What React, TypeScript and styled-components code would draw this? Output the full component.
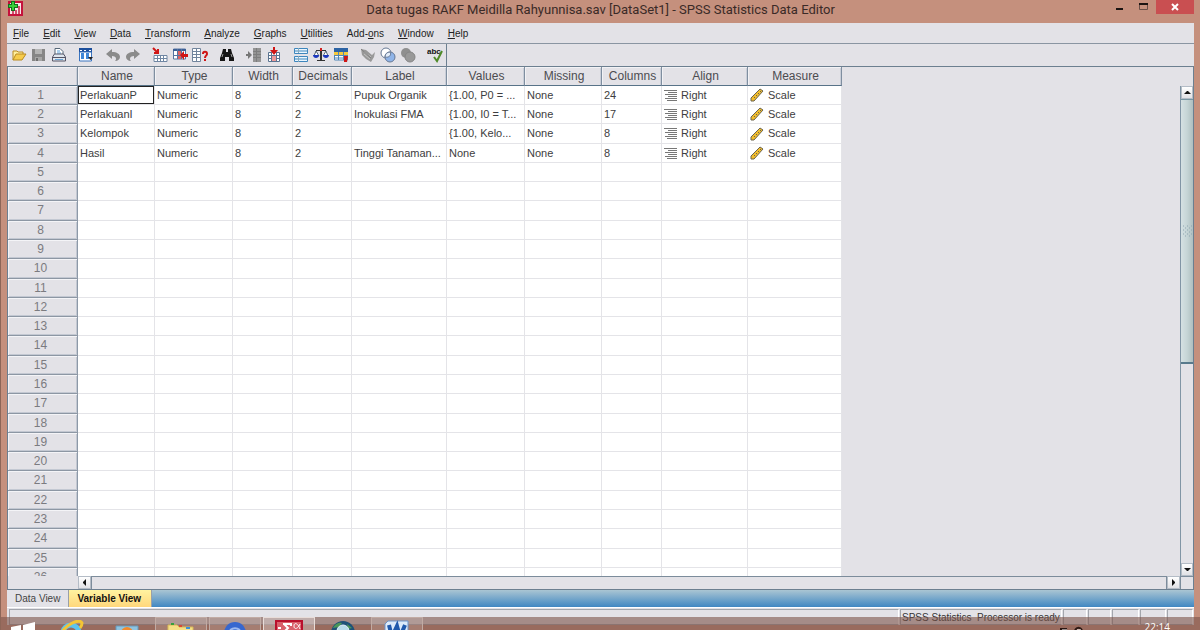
import React from 'react';
import styled, { createGlobalStyle } from 'styled-components';

const face = '#e3e2e7';
const edge = '#6c7f90';
const sans = '"Liberation Sans", Arial, sans-serif';

const GlobalStyle = createGlobalStyle`
  * { box-sizing: border-box; }
  body { margin: 0; background: #c5907d; font-family: ${sans}; color: #222; }
  button { font: inherit; color: inherit; border: 0; padding: 0; margin: 0; background: none; }
  svg { display: block; }
`;

const Screen = styled.div`
  position: relative;
  display: flex;
  flex-direction: column;
  height: 100vh;
  padding: 0 6px 5px 6px;
  overflow: hidden;
  border-left: 1px solid #8d6658;
`;

const TitleBar = styled.header`
  flex: none;
  display: grid;
  grid-template-columns: 1fr auto 1fr;
  height: 23px;
`;

const AppIcon = styled.div`
  padding: 1px 0 0 1px;
`;

const Title = styled.h1`
  margin: 0;
  font: 400 13px/19px Roboto, "Open Sans", sans-serif;
  color: #3a2a27;
  white-space: nowrap;
`;

const WindowControls = styled.div`
  display: flex;
  justify-content: flex-end;
  align-items: flex-start;
`;

const WindowButton = styled.button<{ $close?: boolean }>`
  display: grid;
  place-items: center;
  width: ${p => (p.$close ? 38 : 24)}px;
  height: 14px;
  background: ${p => (p.$close ? '#c94f51' : 'transparent')};
`;

const Client = styled.main`
  flex: 1;
  min-height: 0;
  display: flex;
  flex-direction: column;
  background: ${face};
`;

const MenuBar = styled.nav`
  flex: none;
  display: flex;
  gap: 14px;
  height: 21px;
  padding: 0 6px;
  border-bottom: 1px solid #8a95a2;
`;

const MenuItem = styled.button`
  font-size: 10px;
  line-height: 22px;
`;

const ToolBar = styled.div`
  flex: none;
  display: flex;
  gap: 7px;
  align-self: flex-start;
  height: 22px;
  padding: 0 1px 0 2px;
  border-right: 1px solid ${edge};
`;

const ToolGroup = styled.div`
  display: flex;
`;

const ToolButton = styled.button`
  display: grid;
  place-items: center;
  width: 20px;
  height: 21px;
`;

const Editor = styled.section`
  flex: 1;
  min-height: 0;
  display: grid;
  grid-template-columns: 1fr 13px;
  grid-template-rows: 1fr 13px;
  border: 1px solid ${edge};
`;

const GridPane = styled.div`
  overflow: hidden;
`;

const Grid = styled.table`
  table-layout: fixed;
  width: 834px;
  border-collapse: separate;
  border-spacing: 0;
  background: #fff;
`;

const ColHead = styled.th`
  height: 19px;
  padding: 0 0 0 2px;
  font: 400 12px/18px ${sans};
  color: #4c4c50;
  background: ${face};
  border-right: 1px solid #7f8ea0;
  border-bottom: 1px solid #587388;
  box-shadow: inset 1px 1px #f2f2f5, inset -1px 0 #c9ced8;
`;

const Row = styled.tr`
  height: 19px;
  &:nth-child(7n + 3), &:nth-child(7n) { height: 20px; }
`;

const RowHead = styled.th`
  padding: 0 4px 0 0;
  font: 400 12px/17px ${sans};
  color: #7b7b80;
  background: ${face};
  border-right: 1px solid #8d99a8;
  border-bottom: 1px solid #8d97a4;
  box-shadow: inset 1px 1px #f4f4f7, inset -1px -1px #c3c8d2;
`;

const Cell = styled.td<{ $selected?: boolean }>`
  padding: 0 0 0 2px;
  font-size: 11px;
  line-height: 17px;
  color: #3d3d40;
  white-space: nowrap;
  overflow: hidden;
  text-overflow: ellipsis;
  border-right: 1px solid #e4e4e8;
  border-bottom: 1px solid #e4e4e8;
  ${p => p.$selected && 'box-shadow: inset 0 0 0 1px #222;'}
`;

const IconText = styled.span`
  display: flex;
  align-items: center;
  gap: 4px;
`;

const VScroll = styled.div`
  display: flex;
  flex-direction: column;
  margin-top: 19px;
  border-left: 1px solid #8195a5;
`;

const VThumb = styled.div`
  flex: 0 0 54%;
  display: grid;
  place-items: center;
  background: linear-gradient(90deg, #d5e1e3, #c6d5d6 50%, #aebfc0);
  border-top: 1px solid #7595a2;
  border-bottom: 2px solid #587a8c;
`;

const VTrack = styled.div`
  flex: 1;
`;

const ScrollButton = styled.button`
  flex: none;
  display: grid;
  place-items: center;
  width: 13px;
  height: 13px;
  background: linear-gradient(#fff, #e1e1e5);
  border: 1px solid #b4bcc6;
`;

const VScrollButton = styled(ScrollButton)`
  width: 12px;
`;

const HScroll = styled.div`
  display: flex;
  padding-left: 70px;
`;

const HTrack = styled.div`
  flex: 1;
  border: 1px solid #7c8c9b;
  border-bottom: 0;
`;

const Corner = styled.div`
  border-top: 1px solid #7c8c9b;
  border-left: 1px solid #7c8c9b;
`;

const Tabs = styled.div`
  flex: none;
  display: flex;
  height: 17px;
  background: linear-gradient(#aac5d3, #4188c2);
`;

const Tab = styled.button<{ $active?: boolean }>`
  padding: 0 ${p => (p.$active ? 10 : 8)}px 0 8px;
  font-size: 10px;
  line-height: 18px;
  font-weight: ${p => (p.$active ? 700 : 400)};
  background: ${p => (p.$active ? 'linear-gradient(#fff3a0, #ffd77c)' : face)};
  border-right: 1px solid #9aa0a8;
  color: ${p => (p.$active ? '#111' : '#444')};
`;

const StatusBar = styled.footer`
  flex: none;
  display: flex;
  gap: 1px;
  height: 18px;
  padding: 1px 1px 0 2px;
  border-top: 1px solid #fff;
`;

const StatusCell = styled.div<{ $width?: number }>`
  flex: ${p => (p.$width ? `0 0 ${p.$width}px` : '1')};
  padding: 0 1px;
  font-size: 10px;
  line-height: 16px;
  white-space: pre;
  color: #333;
  border: 1px solid #a3a6ac;
  border-right-color: #fff;
`;

const TaskBar = styled.nav`
  position: absolute;
  left: 0;
  right: 0;
  bottom: 0;
  display: flex;
  justify-content: space-between;
  height: 13px;
  overflow: hidden;
  background: rgba(123, 83, 73, 0.6);
`;

const TaskList = styled.div`
  display: flex;
`;

const TaskButton = styled.button<{ $open?: boolean; $active?: boolean }>`
  display: flex;
  justify-content: center;
  align-items: flex-start;
  width: 52px;
  height: 40px;
  margin-right: 2px;
  padding-top: 2px;
  background: ${p => (p.$active ? 'rgba(255,255,255,0.3)' : p.$open ? 'rgba(255,255,255,0.12)' : 'none')};
  border: 1px solid ${p => (p.$active ? '#e8dcd8' : p.$open ? '#c1aba4' : 'transparent')};
`;

const StartButton = styled(TaskButton)`
  width: 44px;
`;

const Tray = styled.div`
  display: flex;
  align-items: flex-start;
  gap: 44px;
  padding-right: 30px;
`;

const Clock = styled.time`
  padding-top: 3px;
  font: 400 10px/14px "Open Sans", sans-serif;
  color: #fff;
`;

const Svg = ({ w = 16, h = 16, children }: { w?: number; h?: number; children: React.ReactNode }) => (
  <svg width={w} height={h} viewBox={`0 0 ${w} ${h}`} aria-hidden="true">{children}</svg>
);

const OpenIcon = () => (
  <Svg>
    <path d="M2 13V4h4l1 1h5v3" fill="#fff0a0" stroke="#b98a20" />
    <path d="M2 13l3-6h10l-4 6z" fill="#f6cc4c" stroke="#b98a20" />
  </Svg>
);
const SaveIcon = () => (
  <Svg>
    <path d="M1 2h13v12H1z" fill="#868686" />
    <path d="M4 2h7v5H4z" fill="#b4b4b4" />
    <path d="M4 10h7v4H4z" fill="#a6a6a6" />
    <path d="M5 11h2v3H5z" fill="#707070" />
  </Svg>
);
const PrintIcon = () => (
  <Svg>
    <path d="M4 8V1.500h5l3 3V8z" fill="#fff" stroke="#567" />
    <path d="M6 4h3M6 6h4" stroke="#5aa0d8" />
    <path d="M1.500 10l2-3h9l2 3v4h-13z" fill="#dfe6ee" stroke="#556" />
    <path d="M2 10.500h12" stroke="#556" />
    <path d="M4 12h8v1H4z" fill="#6aa6d8" />
  </Svg>
);
const RecallIcon = () => (
  <Svg>
    <path d="M1 1h13v4H1z" fill="#1c4f9c" />
    <path d="M1.500 5h12v9h-12z" fill="#fff" stroke="#3a74c0" />
    <path d="M3 6h3v6H3zM8 6h3v6H8z" fill="#3f87d8" />
    <path d="M2 3.500h2M6 3.500h2M11 3.500h2" stroke="#fff" />
    <path d="M10 10h5l-2.500 3z" fill="#222" />
  </Svg>
);
const UndoIcon = () => (
  <Svg><path d="M1 7l6-5v3c5 0 8 2 8 5 0 2-2 4-5 4 2-2 1-5-3-5v3z" fill="#8b8b8b" /></Svg>
);
const RedoIcon = () => (
  <Svg><path d="M15 7L9 2v3c-5 0-8 2-8 5 0 2 2 4 5 4-2-2-1-5 3-5v3z" fill="#8b8b8b" /></Svg>
);
const GoToCaseIcon = () => (
  <Svg>
    <path d="M1 1l4 4M6 2v4H2" stroke="#d01515" strokeWidth="2" fill="none" />
    <path d="M2 8.500h13v6H2z" fill="#fff" stroke="#6f86a3" />
    <path d="M2 11.500h13M5.500 8v6M8.500 8v6M11.500 8v6" stroke="#6f86a3" />
  </Svg>
);
const GoToVariableIcon = () => (
  <Svg>
    <path d="M1.500 2h12v10h-12z" fill="#fff" stroke="#5674a0" />
    <path d="M1 2h13v2H1z" fill="#3b5f96" />
    <path d="M5 4h4v8H5z" fill="#e06060" />
    <path d="M2 8.500h11M5.500 2v10M9.500 2v10" stroke="#5674a0" />
    <path d="M8 8l4-4v3h4v3h-4v3z" fill="#d01515" />
  </Svg>
);
const VariablesIcon = () => (
  <Svg>
    <path d="M.5 1.500h8v13h-8z" fill="#fff" stroke="#71849c" />
    <path d="M1 4.500h8M1 7.500h8M1 10.500h8M4.500 1v13" stroke="#71849c" />
    <path d="M11 7c0-3 4-3 4 0 0 2-2 1-2 4M13 12v2" stroke="#d01515" strokeWidth="2" fill="none" />
  </Svg>
);
const FindIcon = () => (
  <Svg>
    <path d="M4 2h3v3h2V2h3l1 4 2 5v3h-5v-4H6v4H1v-3l2-5z" fill="#151515" />
    <path d="M3 10l1-3M12 7l1 3" stroke="#999" />
  </Svg>
);
const InsertCasesIcon = () => (
  <Svg>
    <path d="M7 1h8v14H7z" fill="#949494" />
    <path d="M7 4.500h8M7 7.500h8M7 10.500h8M10.500 1v14" stroke="#7d7d7d" />
    <path d="M0 7h2V4l4 4-4 4V9H0z" fill="#777" />
  </Svg>
);
const InsertVariableIcon = () => (
  <Svg>
    <path d="M2.500 5.500h11v9h-11z" fill="#fff" stroke="#5a7390" />
    <path d="M3 8.500h11M3 11.500h11M5.500 6v9M10.500 6v9" stroke="#5a7390" />
    <path d="M6 9h4v5H6z" fill="#e99" />
    <path d="M7 0h2v3h3L8 8 4 3h3z" fill="#d01515" />
  </Svg>
);
const SplitIcon = () => (
  <Svg>
    <path d="M1.500 1.500h13v5h-13zM1.500 9.500h13v5h-13z" fill="#eaf6ff" stroke="#3d86bd" />
    <path d="M1 4h14M1 12h14" stroke="#3d86bd" />
    <path d="M5.500 1v5M5.500 9v6" stroke="#8ab" />
  </Svg>
);
const WeightIcon = () => (
  <Svg>
    <path d="M8 2v11" stroke="#333" strokeWidth="2" />
    <path d="M3 3.500h10M4 13.500h8" stroke="#333" />
    <path d="M3 4L1 9h5zM13 4l-3 5h5z" fill="#fff" stroke="#567" />
    <path d="M0 8h6c0 4-6 4-6 0zM10 8h6c0 4-6 4-6 0z" fill="#1c38c0" />
    <path d="M7 1h2v3H7z" fill="#d02020" />
  </Svg>
);
const SelectIcon = () => (
  <Svg>
    <path d="M1.500 2h13v11h-13z" fill="#fff" stroke="#4f86b8" />
    <path d="M1 1h14v4H1z" fill="#2c63a4" />
    <path d="M1 5h14v3H1z" fill="#f5c93c" />
    <path d="M1 8.500h13M1 11h10M5.500 5v8M10.500 5v8" stroke="#4f86b8" />
    <path d="M11 9h4l-1 6h-3z" fill="#d01515" />
  </Svg>
);
const LabelsIcon = () => (
  <Svg>
    <path d="M1 2l5 1 6 5 3-3-1 5-3 5-5-3-4-4z" fill="#999" />
    <path d="M4 5l7 5M4 7l6 5" stroke="#c2c2c2" />
    <path d="M1 2l10 9" stroke="#808080" />
  </Svg>
);
const UseSetsIcon = () => (
  <Svg>
    <circle cx="6" cy="6" r="5" fill="#fff" stroke="#667894" />
    <circle cx="10" cy="10" r="5" fill="#8fb4e8" stroke="#667894" />
    <path d="M5 10c0-3 2-5 5-5 2 3-1 6-5 5z" fill="#e3edfa" stroke="#667894" />
  </Svg>
);
const ShowAllIcon = () => (
  <Svg>
    <circle cx="6" cy="6" r="5" fill="#8f8f8f" />
    <circle cx="10" cy="10" r="5" fill="#999" stroke="#858585" />
  </Svg>
);
const SpellIcon = () => (
  <svg width="16" height="16" viewBox="0 0 16 16" aria-hidden="true">
    <text x="0" y="7" fontSize="8" fontWeight="700" fontFamily="Liberation Sans" fill="#111">abc</text>
    <path d="M7 10l3 4 5-10" fill="none" stroke="#4e8a28" strokeWidth="2" />
  </svg>
);

const AlignRightIcon = () => (
  <Svg w={13} h={11}>
    <path d="M0 .5h13M4 2.500h9M1 4.500h12M4 6.500h9M1 8.500h12M3 10.500h10" stroke="#777" />
  </Svg>
);
const ScaleIcon = () => (
  <Svg w={14} h={14}>
    <path d="M1 10L10 1l3 2-9 10H1z" fill="#f2bd2c" stroke="#6b6450" />
    <path d="M4 9l1 1M6 7l1 1M8 5l1 1M10 3l1 1" stroke="#6b6450" />
  </Svg>
);

const toolGroups: [string, React.FC][][] = [
  [['Open', OpenIcon], ['Save', SaveIcon], ['Print', PrintIcon]],
  [['Recall dialogs', RecallIcon]],
  [['Undo', UndoIcon], ['Redo', RedoIcon]],
  [['Go to case', GoToCaseIcon], ['Go to variable', GoToVariableIcon], ['Variables', VariablesIcon]],
  [['Find', FindIcon]],
  [['Insert cases', InsertCasesIcon], ['Insert variable', InsertVariableIcon]],
  [['Split file', SplitIcon], ['Weight cases', WeightIcon], ['Select cases', SelectIcon]],
  [['Value labels', LabelsIcon], ['Use variable sets', UseSetsIcon], ['Show all variables', ShowAllIcon]],
  [['Spell check', SpellIcon]],
];

/* Menu captions; "_" stands before the access key. */
const menus = ['_File', '_Edit', '_View', '_Data', '_Transform', '_Analyze', '_Graphs', '_Utilities', 'Add-_ons', '_Window', '_Help'];

const columns: [string, number][] = [
  ['Name', 77], ['Type', 78], ['Width', 60], ['Decimals', 59], ['Label', 95],
  ['Values', 78], ['Missing', 77], ['Columns', 60], ['Align', 86], ['Measure', 94],
];

const variables = [
  ['PerlakuanP', 'Numeric', '8', '2', 'Pupuk Organik', '{1.00, P0 = ...', 'None', '24', 'Right', 'Scale'],
  ['PerlakuanI', 'Numeric', '8', '2', 'Inokulasi FMA', '{1.00, I0 = T...', 'None', '17', 'Right', 'Scale'],
  ['Kelompok', 'Numeric', '8', '2', '', '{1.00, Kelo...', 'None', '8', 'Right', 'Scale'],
  ['Hasil', 'Numeric', '8', '2', 'Tinggi Tanaman...', 'None', 'None', '8', 'Right', 'Scale'],
];

const rowNumbers = Array.from({ length: 26 }, (_, i) => i + 1);

function MenuLabel({ text }: { text: string }) {
  const at = text.indexOf('_');
  return <MenuItem>{text.slice(0, at)}<u>{text[at + 1]}</u>{text.slice(at + 2)}</MenuItem>;
}

function CellContent({ column, value }: { column: number; value: string }) {
  if (!value) return null;
  if (column === 8) return <IconText><AlignRightIcon />{value}</IconText>;
  if (column === 9) return <IconText><ScaleIcon />{value}</IconText>;
  return <>{value}</>;
}

function VariableGrid() {
  return (
    <Grid>
      <colgroup>
        <col style={{ width: 70 }} />
        {columns.map(([name, width]) => <col key={name} style={{ width }} />)}
      </colgroup>
      <thead>
        <tr>
          <ColHead as="td" />
          {columns.map(([name]) => <ColHead key={name} scope="col">{name}</ColHead>)}
        </tr>
      </thead>
      <tbody>
        {rowNumbers.map((n, r) => (
          <Row key={n}>
            <RowHead scope="row">{n}</RowHead>
            {columns.map(([name], c) => (
              <Cell key={name} $selected={r === 0 && c === 0}>
                <CellContent column={c} value={variables[r]?.[c] ?? ''} />
              </Cell>
            ))}
          </Row>
        ))}
      </tbody>
    </Grid>
  );
}

function Arrow({ d }: { d: string }) {
  return <Svg w={7} h={7}><path d={d} fill="#111" /></Svg>;
}

function Tasks() {
  return (
    <TaskList>
      <StartButton aria-label="Start">
        <Svg w={24} h={26}><path d="M0 7l10-2v10H0zM12 5l12-3v13H12z" fill="#fff" /></Svg>
      </StartButton>
      <TaskButton aria-label="Internet Explorer">
        <Svg w={28} h={26}>
          <circle cx="12" cy="13" r="8" fill="none" stroke="#5cc4ee" strokeWidth="5" />
          <path d="M2 14C6 5 20-2 23 3c0 2-1 4-2 5" fill="none" stroke="#f3c534" strokeWidth="3" />
        </Svg>
      </TaskButton>
      <TaskButton aria-label="Media player">
        <Svg w={24} h={26}>
          <path d="M1 6h22v20H1z" fill="#8fc3e0" stroke="#659abc" />
          <circle cx="12" cy="13" r="6" fill="#f28a2c" />
        </Svg>
      </TaskButton>
      <TaskButton $open aria-label="File Explorer">
        <Svg w={28} h={26}>
          <path d="M1 5h9l2 2h14v19H1z" fill="#f5df86" stroke="#d8ba58" />
          <path d="M4 3h3v2H4z" fill="#35a03c" /><path d="M12 5h3v2h-3z" fill="#d84a35" /><path d="M19 7h4v2h-4z" fill="#3c93d8" />
        </Svg>
      </TaskButton>
      <TaskButton $open aria-label="Browser">
        <Svg w={22} h={26}><circle cx="11" cy="13" r="11" fill="#3767cf" /><path d="M6 10c3-2 7-2 10 0" stroke="#9db8ee" strokeWidth="2" fill="none" /></Svg>
      </TaskButton>
      <TaskButton $open $active aria-label="SPSS">
        <Svg w={28} h={26}>
          <path d="M1 1h26v25H1z" fill="#d9606b" stroke="#b9102c" strokeWidth="2" />
          <path d="M3 8h3M8 4h8v2M9 4l4 4-4 4" stroke="#fff" strokeWidth="2" fill="none" />
          <path d="M25 4c-2 5-6 6-6 2s4-3 6 3" stroke="#fff" fill="none" />
        </Svg>
      </TaskButton>
      <TaskButton aria-label="Globe">
        <Svg w={26} h={26}>
          <circle cx="13" cy="13" r="12" fill="#1e5278" />
          <path d="M3 8c2-5 7-6 9-5l-3 4zM17 4l5 4-4 1z" fill="#4a9658" />
          <circle cx="13" cy="11" r="6" fill="#b8dcea" stroke="#e5f2f7" />
        </Svg>
      </TaskButton>
      <TaskButton $open aria-label="Word">
        <Svg w={28} h={26}>
          <path d="M2 4l3-3h20v25H2z" fill="#dceafa" stroke="#6d93c8" />
          <path d="M6 5l3 12 5-11 3 11 5-12" stroke="#2059ac" strokeWidth="4" fill="none" />
        </Svg>
      </TaskButton>
    </TaskList>
  );
}

export default function App() {
  return (
    <>
      <GlobalStyle />
      <Screen>
        <TitleBar>
          <AppIcon>
            <Svg w={15} h={15}>
              <path d="M1 1h13v13H1z" fill="#f8e6ea" stroke="#c5123c" strokeWidth="2" />
              <path d="M4 10h2v3H4zM7 9h2v4H7zM10 5h2v8h-2z" fill="#d2506c" />
              <path d="M3 0h4v3h3v4H7v3H3V7H0V3h3z" fill="#156e1c" />
              <path d="M4 1h2v3h3v2H6v3H4V6H1V4h3z" fill="#38d03a" />
            </Svg>
          </AppIcon>
          <Title>Data tugas RAKF Meidilla Rahyunnisa.sav [DataSet1] - SPSS Statistics Data Editor</Title>
          <WindowControls>
            <WindowButton aria-label="Minimize"><Svg w={8} h={10}><path d="M0 6h7v2H0z" fill="#1b1412" /></Svg></WindowButton>
            <WindowButton aria-label="Maximize">
              <Svg w={10} h={8}><path d="M.5 .5h8v6h-8z" fill="none" stroke="#6b5048" /><path d="M0 0h9v2H0z" fill="#1b1412" /></Svg>
            </WindowButton>
            <WindowButton $close aria-label="Close"><Svg w={8} h={8}><path d="M1 1l6 6M7 1L1 7" stroke="#fff" strokeWidth="2" /></Svg></WindowButton>
          </WindowControls>
        </TitleBar>
        <Client>
          <MenuBar>{menus.map(m => <MenuLabel key={m} text={m} />)}</MenuBar>
          <ToolBar>
            {toolGroups.map((group, i) => (
              <ToolGroup key={i}>
                {group.map(([label, Icon]) => <ToolButton key={label} aria-label={label}><Icon /></ToolButton>)}
              </ToolGroup>
            ))}
          </ToolBar>
          <Editor>
            <GridPane><VariableGrid /></GridPane>
            <VScroll>
              <VScrollButton aria-label="Scroll up"><Arrow d="M0 5l3-3h1l3 3z" /></VScrollButton>
              <VThumb>
                <Svg w={9} h={12}>
                  <path d="M0 1h9M0 5h9M0 9h9" stroke="#8ea5b0" strokeDasharray="1 3" />
                  <path d="M2 3h7M2 7h7M2 11h7" stroke="#8ea5b0" strokeDasharray="1 3" />
                </Svg>
              </VThumb>
              <VTrack />
              <VScrollButton aria-label="Scroll down"><Arrow d="M0 2h7L4 5H3z" /></VScrollButton>
            </VScroll>
            <HScroll>
              <ScrollButton aria-label="Scroll left"><Arrow d="M5 0v7L2 4V3z" /></ScrollButton>
              <HTrack />
              <ScrollButton aria-label="Scroll right"><Arrow d="M2 0v7l3-3V3z" /></ScrollButton>
            </HScroll>
            <Corner />
          </Editor>
          <Tabs>
            <Tab>Data View</Tab>
            <Tab $active>Variable View</Tab>
          </Tabs>
          <StatusBar>
            <StatusCell />
            <StatusCell $width={162}>{'SPSS Statistics  Processor is ready'}</StatusCell>
            <StatusCell $width={24} />
            <StatusCell $width={23} />
            <StatusCell $width={27} />
            <StatusCell $width={26} />
            <StatusCell $width={26} />
          </StatusBar>
        </Client>
        <TaskBar>
          <Tasks />
          <Tray>
            <Svg w={42} h={13}>
              <path d="M1 12h7M16 13c2-3 5-3 7 0" stroke="#2b1712" strokeWidth="2" fill="none" />
              <path d="M3 13h5M18 13h4" stroke="#fff" />
            </Svg>
            <Clock>22:14</Clock>
          </Tray>
        </TaskBar>
      </Screen>
    </>
  );
}
